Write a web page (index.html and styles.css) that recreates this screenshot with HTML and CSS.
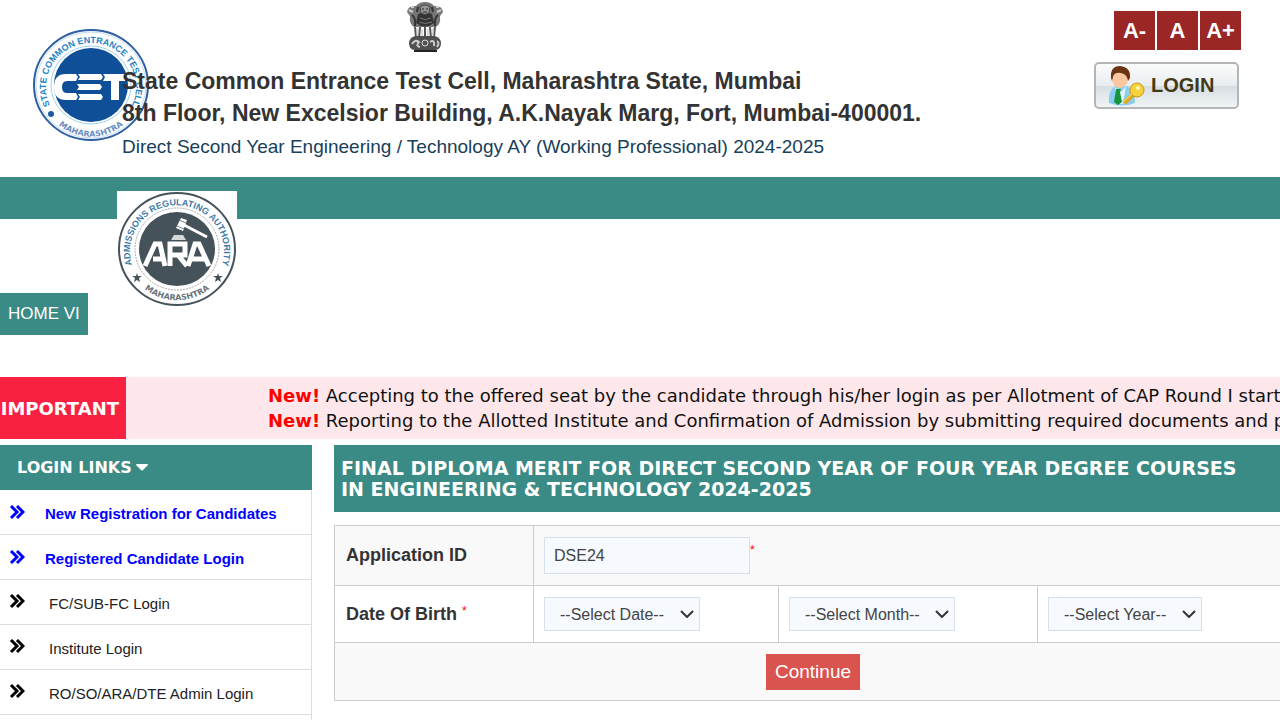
FILE: index.html
```html
<!DOCTYPE html>
<html lang="en">
<head>
  <meta charset="utf-8">
  <title>State Common Entrance Test Cell</title>
  <link rel="stylesheet" href="styles.css">
</head>
<body>
  <header class="header">
    <div class="header-logo">
      <svg class="cet-logo" viewBox="0 0 116 112" role="img" aria-label="CET Cell logo">
        <defs>
          <path id="cetTop" d="M19 80 A45 44 0 1 1 97 80"/>
          <path id="cetBottom" d="M13 80 A50 49 0 0 0 103 80"/>
        </defs>
        <ellipse cx="58" cy="56" rx="57" ry="55" fill="#fff" stroke="#2c5fa3" stroke-width="2"/>
        <ellipse cx="58" cy="56" rx="55" ry="53" fill="none" stroke="#c9dcf0"/>
        <ellipse cx="58" cy="56" rx="40" ry="39" fill="none" stroke="#9ed3ee"/>
        <circle cx="58" cy="56" r="37" fill="#0f4f97"/>
        <text class="cet-ring"><textPath href="#cetTop" startOffset="50%">STATE COMMON ENTRANCE TEST CELL</textPath></text>
        <text class="cet-state"><textPath href="#cetBottom" startOffset="50%">MAHARASHTRA</textPath></text>
        <circle cx="18" cy="85" r="3" fill="#1c5ba5"/>
        <g fill="#fff">
          <path d="M43 45 L45 48 L43 52 H34 Q29 52 29 58 Q29 64 34 64 H43 L45 68 L43 71 H33 Q21 71 21 58 Q21 45 33 45Z"/>
          <path d="M45 45 H68 L70 48 L68 51 H45 L47 48Z"/>
          <path d="M44 55 H67 L69 58 L67 61 H44 L46 58Z"/>
          <path d="M45 65 H68 L70 68 L68 71 H45 L47 68Z"/>
          <path d="M70 45 H92 V52 H86 V71 H78 V52 H70 L72 48Z"/>
        </g>
      </svg>
    </div>
    <div class="header-text">
      <svg class="emblem" viewBox="0 0 36 50" role="img" aria-label="State Emblem of India">
        <path d="M9 4 Q12 0 18 0 Q24 0 27 4 Q35 3 36 10 L33 14 Q34 22 29 25 H7 Q2 22 3 14 L0 10 Q1 3 9 4Z" fill="#777"/>
        <path d="M11 12 Q18 9 25 12 L27 21 Q18 28 9 21Z" fill="#333"/>
        <path d="M5 13 Q9 16 8 24 M31 13 Q27 16 28 24 M11 5 L10 10 M25 5 L26 10" stroke="#333" stroke-width="2" fill="none"/>
        <path d="M13 5 Q18 1 23 5 L22 11 Q18 14 14 11Z" fill="#999" stroke="#444"/>
        <path d="M15 7 H17 M19 7 H21 M16 10 H20" stroke="#222"/>
        <path d="M2 8 L6 10 M34 8 L30 10 M4 5 H7 M29 5 H32" stroke="#ccc" stroke-width="2"/>
        <path d="M13 16 Q18 19 24 16 M12 20 Q18 23 25 20" fill="none" stroke="#777"/>
        <path d="M8 25 L9 35 M13 25 L12 36 M18 25 V37 M23 25 L24 36 M28 25 L27 35" stroke="#555" stroke-width="2"/>
        <path d="M10 26 V35 M15 27 V37 M21 27 V37 M26 26 V35" stroke="#bbb"/>
        <path d="M8 34 H28 Q34 36 34 41 Q34 48 28 48 H8 Q2 48 2 41 Q2 36 8 34Z" fill="#505050"/>
        <path d="M5 42 Q8 37 12 40 Q8 44 13 45 M23 40 Q28 37 27 44 M30 39 Q33 41 30 45" fill="none" stroke="#ccc" stroke-width="2"/>
        <circle cx="18" cy="41" r="3" fill="none" stroke="#ddd"/>
        <path d="M7 49 H30" stroke="#222" stroke-width="2"/>
      </svg>
      <h1>State Common Entrance Test Cell, Maharashtra State, Mumbai<br>8th Floor, New Excelsior Building, A.K.Nayak Marg, Fort, Mumbai-400001.</h1>
      <p>Direct Second Year Engineering / Technology AY (Working Professional) 2024-2025</p>
    </div>
    <div class="header-tools">
      <div class="font-size">
        <button type="button">A-</button>
        <button type="button">A</button>
        <button type="button">A+</button>
      </div>
      <button type="button" class="login-button">
        <svg viewBox="0 0 38 42" aria-hidden="true">
          <path d="M2 38 Q1 24 9 21 L20 21 Q28 25 28 38 Q15 43 2 38Z" fill="#8bcdf2"/>
          <path d="M8 22 L14 27 L19 21 L16 39 H10Z" fill="#e3f5ff"/>
          <path d="M9 24 H14 L13 27 L15 37 L11 40 L7 37Z" fill="#15963d"/>
          <ellipse cx="13" cy="14" rx="8" ry="9" fill="#f9c7a0"/>
          <path d="M4 13 Q3 1 13 1 Q24 2 23 13 L21 16 Q20 9 14 8 Q7 7 6 12 L5 16Z" fill="#6b3515"/>
          <path d="M28 28 L17 38" stroke="#d9a928" stroke-width="5"/>
          <circle cx="30" cy="25" r="7" fill="#f6d13c" stroke="#c5951c"/>
          <path d="M25 29 L16 37" stroke="#ffe67a" stroke-width="1"/>
          <circle cx="31" cy="23" r="2" fill="#fff7bd"/>
        </svg>
        LOGIN
      </button>
    </div>
  </header>

  <nav class="nav">
    <div class="nav-bar"></div>
    <svg class="ara-logo" viewBox="0 0 120 116" role="img" aria-label="Admissions Regulating Authority logo">
      <defs>
        <path id="araTop" d="M18 81 A47 46 0 1 1 102 81"/>
        <path id="araBottom" d="M13 80 A52 51 0 0 0 107 80"/>
      </defs>
      <rect width="120" height="116" fill="#fff"/>
      <ellipse cx="60" cy="58" rx="58" ry="56" fill="#fff" stroke="#45525a" stroke-width="2"/>
      <ellipse cx="60" cy="58" rx="42" ry="41" fill="none" stroke="#aaa" stroke-dasharray="2 1"/>
      <ellipse cx="60" cy="58" rx="38" ry="37" fill="#45525a"/>
      <text class="ara-ring"><textPath href="#araTop" startOffset="50%">ADMISSIONS REGULATING AUTHORITY</textPath></text>
      <text class="ara-state"><textPath href="#araBottom" startOffset="50%">MAHARASHTRA</textPath></text>
      <path id="araStar" d="M20 82 l1 3 h4 l-3 2 l1 4 l-3 -2 l-3 2 l1 -4 l-3 -2 h4Z" fill="#45525a"/>
      <use href="#araStar" x="81"/>
      <g fill="none" stroke="#fff" stroke-width="5">
        <path d="M28 75 L38 53 H43 L48 75 M36 68 H48"/>
        <path d="M53 75 V53 H68 V64 H54 M61 64 L70 75"/>
        <path d="M71 75 L78 53 H82 L92 75 M74 68 H88"/>
      </g>
      <path d="M57 44 H66 L69 49 H54Z" fill="#d5d9da"/>
      <path d="M64 27 L70 29 L66 40 L59 37Z" fill="#fff"/>
      <path d="M62 29 L69 32 M60 35 L67 38" stroke="#78848a"/>
      <path d="M67 34 L90 46" stroke="#fff" stroke-width="3"/>
    </svg>
    <a href="#" class="nav-home">HOME VI</a>
  </nav>

  <section class="important">
    <strong class="important-label">IMPORTANT</strong>
    <div class="important-news">
      <p><b>New!</b> Accepting to the offered seat by the candidate through his/her login as per Allotment of CAP Round I starts</p>
      <p><b>New!</b> Reporting to the Allotted Institute and Confirmation of Admission by submitting required documents and payment</p>
    </div>
  </section>

  <div class="content">
    <aside class="sidebar">
      <h2>LOGIN LINKS <svg class="caret" viewBox="0 0 12 7" aria-hidden="true"><path d="M1 0 H11 Q13 0 11 2 L7 6 Q6 7 5 6 L1 2 Q-1 0 1 0Z" fill="currentColor"/></svg></h2>
      <ul>
        <li class="highlight"><a href="#"><svg class="chevrons" viewBox="0 0 16 16" aria-hidden="true"><path d="M2 2 L8 8 L2 14 M8 2 L14 8 L8 14"/></svg>New Registration for Candidates</a></li>
        <li class="highlight"><a href="#"><svg class="chevrons" viewBox="0 0 16 16" aria-hidden="true"><path d="M2 2 L8 8 L2 14 M8 2 L14 8 L8 14"/></svg>Registered Candidate Login</a></li>
        <li><a href="#"><svg class="chevrons" viewBox="0 0 16 16" aria-hidden="true"><path d="M2 2 L8 8 L2 14 M8 2 L14 8 L8 14"/></svg>FC/SUB-FC Login</a></li>
        <li><a href="#"><svg class="chevrons" viewBox="0 0 16 16" aria-hidden="true"><path d="M2 2 L8 8 L2 14 M8 2 L14 8 L8 14"/></svg>Institute Login</a></li>
        <li><a href="#"><svg class="chevrons" viewBox="0 0 16 16" aria-hidden="true"><path d="M2 2 L8 8 L2 14 M8 2 L14 8 L8 14"/></svg>RO/SO/ARA/DTE Admin Login</a></li>
      </ul>
    </aside>

    <main class="main">
      <h2>FINAL DIPLOMA MERIT FOR DIRECT SECOND YEAR OF FOUR YEAR DEGREE COURSES<br>IN ENGINEERING &amp; TECHNOLOGY 2024-2025</h2>
      <form>
        <table class="merit-table">
          <colgroup>
            <col class="col-label">
            <col class="col-date">
            <col class="col-month">
            <col>
          </colgroup>
          <tr class="shaded">
            <th><label for="applicationId">Application ID</label></th>
            <td colspan="3">
              <div class="field"><input type="text" id="applicationId" value="DSE24"><span class="required">*</span></div>
            </td>
          </tr>
          <tr>
            <th><label for="birthDate">Date Of Birth</label> <span class="required top">*</span></th>
            <td>
              <div class="select"><select id="birthDate"><option>--Select Date--</option></select><svg viewBox="0 0 14 8" aria-hidden="true"><path d="M1 1 L7 7 L13 1"/></svg></div>
            </td>
            <td>
              <div class="select"><select id="birthMonth" aria-label="Month of birth"><option>--Select Month--</option></select><svg viewBox="0 0 14 8" aria-hidden="true"><path d="M1 1 L7 7 L13 1"/></svg></div>
            </td>
            <td>
              <div class="select"><select id="birthYear" aria-label="Year of birth"><option>--Select Year--</option></select><svg viewBox="0 0 14 8" aria-hidden="true"><path d="M1 1 L7 7 L13 1"/></svg></div>
            </td>
          </tr>
          <tr class="shaded">
            <td colspan="4" class="actions"><button type="submit" class="continue">Continue</button></td>
          </tr>
        </table>
      </form>
    </main>
  </div>
</body>
</html>
```

FILE: styles.css
```css
* {
  box-sizing: border-box;
}
body {
  margin: 0;
  overflow-x: hidden;
  background-color: #fff;
  color: #333;
  font-family: "Liberation Sans", Arial, sans-serif;
}
h1, h2, p, ul {
  margin: 0;
  padding: 0;
}
a {
  color: inherit;
  text-decoration: none;
}
button {
  border: none;
  padding: 0;
  font-family: inherit;
  cursor: pointer;
}
svg {
  display: block;
}

/* Header */
.header {
  display: flex;
  min-height: 177px;
}
.header-logo {
  flex: none;
  width: 122px;
  padding: 29px 0 0 33px;
}
.cet-logo {
  width: 116px;
  height: 112px;
}
.cet-ring,
.ara-ring {
  fill: #2584c6;
  font-size: 9px;
  font-weight: bold;
  text-anchor: middle;
}
.cet-state,
.ara-state {
  fill: #6d8fc0;
  font-family: "DejaVu Sans", Verdana, sans-serif;
  font-size: 8px;
  font-weight: bold;
  text-anchor: middle;
}
.header-text {
  position: relative;
  flex: 1;
  padding-top: 2px;
}
.emblem {
  width: 36px;
  height: 50px;
  margin-left: 285px;
}
.header h1 {
  margin-top: 13px;
  font-size: 23px;
  line-height: 32px;
  white-space: nowrap;
}
.header p {
  margin-top: 6px;
  color: #17405a;
  font-size: 19px;
  line-height: 24px;
}
.header-tools {
  display: flex;
  flex-direction: column;
  align-items: flex-end;
  gap: 12px;
  padding: 11px 39px 0 0;
}
.font-size {
  display: flex;
  gap: 2px;
}
.font-size button {
  width: 41px;
  height: 39px;
  background-color: #9a2626;
  color: #fff;
  font-size: 22px;
  font-weight: bold;
}
.login-button {
  display: flex;
  align-items: center;
  gap: 6px;
  width: 145px;
  height: 47px;
  margin-right: 2px;
  padding-left: 11px;
  border: 2px solid #b3b5b6;
  border-radius: 5px;
  background: linear-gradient(#fafbfb, #e9edef 50%, #d7dee2 52%, #f1f4f5);
  color: #413a15;
  font-size: 20px;
  font-weight: bold;
}
.login-button svg {
  width: 38px;
  height: 42px;
}

/* Navigation */
.nav {
  position: relative;
  height: 200px;
}
.nav-bar {
  height: 42px;
  margin-bottom: 74px;
  background-color: #3a8a85;
}
.ara-logo {
  position: absolute;
  top: 14px;
  left: 117px;
  width: 120px;
  height: 116px;
}
.ara-ring {
  fill: #3f7ba9;
}
.ara-state {
  fill: #68747b;
}
.nav-home {
  display: inline-block;
  padding: 0 8px;
  background-color: #3a8a85;
  color: #fff;
  font-size: 17px;
  line-height: 42px;
}

/* Important notices */
.important {
  display: flex;
  height: 62px;
  background-color: #fee7ea;
  font-family: "DejaVu Sans", Verdana, sans-serif;
}
.important-label {
  display: flex;
  flex: none;
  align-items: center;
  justify-content: flex-end;
  width: 126px;
  padding-right: 7px;
  background-color: #f92141;
  color: #fff;
  font-size: 18px;
}
.important-news {
  flex: 1;
  min-width: 0;
  padding: 6px 0 0 142px;
  overflow: hidden;
  color: #111;
  font-size: 18px;
  line-height: 25px;
  white-space: nowrap;
}
.important-news b {
  color: #f00;
}

/* Content */
.content {
  display: flex;
  gap: 22px;
  margin: 6px -12px 0 0;
}
.sidebar {
  flex: none;
  width: 312px;
}
.sidebar h2 {
  display: flex;
  align-items: center;
  gap: 4px;
  height: 45px;
  padding-left: 17px;
  background-color: #3a8a85;
  color: #fff;
  font-family: "DejaVu Sans", Verdana, sans-serif;
  font-size: 16px;
}
.caret {
  width: 12px;
  height: 7px;
}
.sidebar ul {
  border-right: 1px solid #ddd;
  padding-bottom: 20px;
  list-style: none;
}
.sidebar li {
  border-bottom: 1px solid #ddd;
  color: #222;
  font-size: 15px;
}
.sidebar a {
  display: flex;
  align-items: center;
  gap: 24px;
  height: 44px;
  padding: 2px 0 0 9px;
}
.sidebar .highlight {
  color: #00f;
  font-weight: bold;
}
.sidebar .highlight a {
  gap: 20px;
  padding-top: 3px;
}
.chevrons {
  width: 16px;
  height: 16px;
  margin-bottom: 4px;
  fill: none;
  stroke: #000;
  stroke-width: 3;
}
.highlight .chevrons {
  stroke: #00f;
}
.main {
  flex: 1;
  min-width: 0;
}
.main h2 {
  padding: 13px 20px 12px 7px;
  background-color: #3a8a85;
  color: #fff;
  font-family: "DejaVu Sans", Verdana, sans-serif;
  font-size: 19px;
  line-height: 21px;
  white-space: nowrap;
}
.merit-table {
  width: 100%;
  margin-top: 13px;
  border-collapse: collapse;
  table-layout: fixed;
}
.merit-table th,
.merit-table td {
  padding: 11px 10px;
  border: 1px solid #ccc;
  text-align: left;
}
.merit-table th {
  padding-left: 11px;
  font-size: 18px;
}
.shaded {
  background-color: #f9f9f9;
}
.col-label {
  width: 199px;
}
.col-date {
  width: 245px;
}
.col-month {
  width: 259px;
}
.field {
  display: flex;
}
.required {
  color: #f00;
  font-size: 12px;
  font-weight: normal;
}
.required.top {
  vertical-align: top;
}
.field .required {
  padding-top: 6px;
}
input, select {
  border: 1px solid #d6dfec;
  background-color: #f6f9fe;
  color: #444;
  font-family: inherit;
}
input {
  width: 206px;
  height: 37px;
  padding: 0 9px;
  font-size: 16px;
}
.select {
  display: inline-block;
  position: relative;
  vertical-align: top;
}
select {
  display: block;
  height: 34px;
  padding: 0 34px 0 15px;
  appearance: none;
  font-size: 16px;
}
.select svg {
  position: absolute;
  top: 13px;
  right: 6px;
  width: 14px;
  height: 8px;
  fill: none;
  stroke: #333;
  stroke-width: 2;
  pointer-events: none;
}
.merit-table .actions {
  padding: 11px 10px 10px;
  text-align: center;
}
.continue {
  height: 36px;
  padding: 0 9px;
  background-color: #d9534f;
  color: #fff;
  font-size: 19px;
  vertical-align: top;
}
```
